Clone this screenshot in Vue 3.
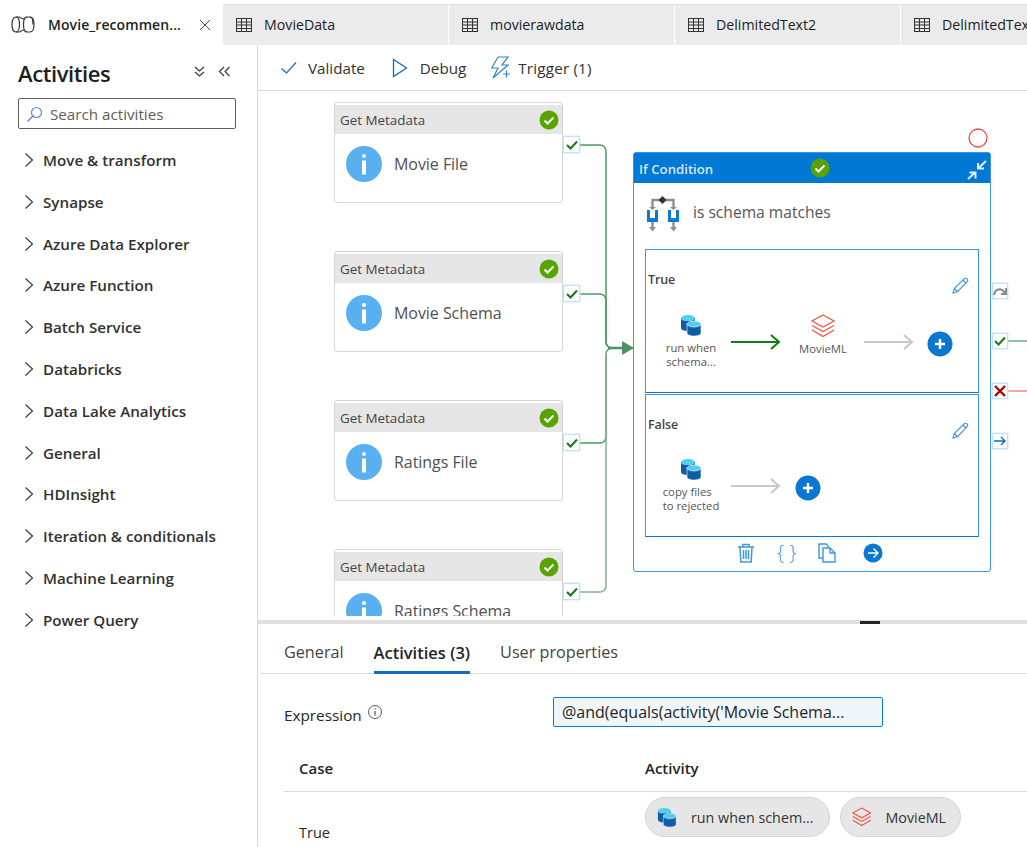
<script setup>
const tabs = ['MovieData', 'movierawdata', 'DelimitedText2', 'DelimitedText3']
const groups = [
  'Move & transform', 'Synapse', 'Azure Data Explorer', 'Azure Function', 'Batch Service', 'Databricks',
  'Data Lake Analytics', 'General', 'HDInsight', 'Iteration & conditionals', 'Machine Learning', 'Power Query'
]
const nodes = ['Movie File', 'Movie Schema', 'Ratings File', 'Ratings Schema']
</script>

<template>
  <div class="app">
    <div class="tabs">
      <div class="tab active">
        <svg class="pipe-ic" width="24" height="17" viewBox="0 0 24 17" fill="none" stroke="#333" stroke-width="1.200">
          <path d="M5 1h3c2 0 2.500 2 4 2s2-2 4-2h3c2.500 0 4 3 4 7.500S21.500 16 19 16h-3c-2 0-2.500-2-4-2s-2 2-4 2H5c-2.500 0-4-3-4-7.500S2.500 1 5 1z" />
          <path d="M5 1c2 0 3.500 3 3.500 7.500S7 16 5 16M16 1c-2 0-3.500 3-3.500 7.500S14 16 16 16M19 1c2 0 3 3 3 7.500" />
        </svg>
        <span class="tab-name">Movie_recommen...</span>
        <svg class="close-ic" width="12" height="12" viewBox="0 0 12 12" stroke="#444" stroke-width="1"><path d="M1 1l10 10M11 1L1 11" /></svg>
      </div>
      <div v-for="t in tabs" :key="t" class="tab">
        <svg width="16" height="14" viewBox="0 0 16 14" fill="none" stroke="#333" stroke-width="1">
          <rect x="0.5" y="0.5" width="15" height="13" />
          <path d="M0 4h16M0 7h16M0 10.500h16M5.500 0v14M10.500 0v14" />
        </svg>
        <span class="tab-name">{{ t }}</span>
      </div>
    </div>

    <div class="body">
      <aside class="side">
        <div class="side-head">
          <h1>Activities</h1>
          <svg width="13" height="13" viewBox="0 0 13 13" fill="none" stroke="#333" stroke-width="1.100"><path d="M2 2l4.500 4 4.500-4M2 7l4.500 4 4.500-4" /></svg>
          <svg class="collapse" width="13" height="13" viewBox="0 0 13 13" fill="none" stroke="#333" stroke-width="1.100"><path d="M6 2L1.500 6.500 6 11M11.500 2L7 6.500l4.500 4.500" /></svg>
        </div>
        <div class="search">
          <svg width="17" height="17" viewBox="0 0 17 17" fill="none" stroke="#7a6fe0" stroke-width="1.200">
            <circle cx="10.500" cy="6.500" r="5" stroke="#5a8fe0" />
            <path d="M7 10l-5.500 5.500" />
          </svg>
          <span>Search activities</span>
        </div>
        <ul class="groups">
          <li v-for="g in groups" :key="g">
            <svg width="10" height="16" viewBox="0 0 10 16" fill="none" stroke="#333" stroke-width="1.100"><path d="M1.500 1.500L8.500 8l-7 6.500" /></svg>
            <span>{{ g }}</span>
          </li>
        </ul>
      </aside>

      <main class="main">
        <div class="toolbar">
          <div class="tool validate">
            <svg width="18" height="14" viewBox="0 0 18 14" fill="none" stroke="#0f6cbd" stroke-width="1.200"><path d="M1.500 7.500l5 4.500L16 1.500" /></svg>
            <span>Validate</span>
          </div>
          <div class="tool debug">
            <svg width="16" height="20" viewBox="0 0 16 20" fill="none" stroke="#0f6cbd" stroke-width="1.300"><path d="M1.500 1.500L14.500 10 1.500 18.500z" /></svg>
            <span>Debug</span>
          </div>
          <div class="tool trigger">
            <svg width="20" height="23" viewBox="0 0 20 23" fill="none" stroke="#2f83d0" stroke-width="1.200"><path d="M7 1h10l-6 8h6L2 22l5-10H.8zM12 18h7M15.500 14.500v7" /></svg>
            <span>Trigger (1)</span>
          </div>
        </div>

        <div class="canvas">
          <svg class="wires" width="769" height="525" viewBox="258 91 769 525" fill="none">
            <g stroke="#7fb58d" stroke-width="1.500">
              <path d="M580 145h20a6 6 0 0 1 6 6v191a6 6 0 0 0 6 6" stroke="#4f9a63" />
              <path d="M580 294h20a6 6 0 0 1 6 6v42a6 6 0 0 0 6 6" stroke="#4f9a63" />
              <path d="M580 443h20a6 6 0 0 0 6-6v-83a6 6 0 0 1 6-6" stroke="#4f9a63" />
              <path d="M580 592h20a6 6 0 0 0 6-6V354a6 6 0 0 1 6-6" />
            </g>
            <path d="M608 348h14" stroke="#4a9360" stroke-width="2.500" />
            <path d="M622 341l12 7-12 7z" fill="#4a9360" />
            <path d="M1007 341h20" stroke="#6fae80" stroke-width="1.500" />
            <path d="M1007 391h20" stroke="#ee8d7a" stroke-width="1.500" />
          </svg>

          <div class="node-col">
            <div v-for="n in nodes" :key="n" class="node">
              <div class="node-head">
                <span>Get Metadata</span>
                <svg class="ok" width="20" height="20" viewBox="0 0 20 20"><circle cx="10" cy="10" r="9.500" fill="#57a300" /><path d="M5.500 10.500l3 3 6-6" fill="none" stroke="#fff" stroke-width="2" /></svg>
              </div>
              <div class="node-body">
                <svg width="36" height="36" viewBox="0 0 36 36"><circle cx="18" cy="18" r="18" fill="#59b0f0" /><rect x="16" y="14.500" width="4" height="14" fill="#fff" /><rect x="16" y="8" width="4" height="4" rx="2" fill="#fff" /></svg>
                <span>{{ n }}</span>
              </div>
              <div class="port">
                <svg width="12" height="10" viewBox="0 0 12 10" fill="none" stroke="#107c10" stroke-width="2"><path d="M1 5l3.500 3.500L11 1.500" /></svg>
              </div>
            </div>
          </div>

          <svg class="red-dot" width="20" height="20" viewBox="0 0 20 20" fill="none" stroke="#f04848" stroke-width="1.300"><circle cx="10" cy="10" r="9" /></svg>

          <section class="ifbox">
            <header class="if-head">
              <span class="if-title">If Condition</span>
              <svg class="if-ok" width="20" height="20" viewBox="0 0 20 20"><circle cx="10" cy="10" r="9.500" fill="#57a300" /><path d="M5.500 10.500l3 3 6-6" fill="none" stroke="#fff" stroke-width="2" /></svg>
              <svg class="if-exp" width="20" height="20" viewBox="0 0 20 20" fill="none" stroke="#dceefb" stroke-width="2"><path d="M19 1l-8 7.500M11 3v5.500h6M1 19l7-6.500M2.500 12.500h6v6" /></svg>
            </header>
            <div class="if-name">
              <svg width="36" height="36" viewBox="0 0 36 36" fill="none">
                <path d="M7.500 12V4h21v8" stroke="#8f8f8f" stroke-width="2.400" />
                <path d="M4 11h7l-3.500 3zM25 11h7l-3.500 3zM4 31h7l-3.500 4.500zM25 31h7l-3.500 4.500z" fill="#8f8f8f" />
                <path d="M7.500 26v6M28.500 26v6" stroke="#8f8f8f" stroke-width="2.400" />
                <path d="M17.500 0l4 4-4 4-4-4z" fill="#333" />
                <path d="M2 14h3v8h5v-8h3v12H2zM23 14h3v8h5v-8h3v12H23z" fill="#0f78d4" />
              </svg>
              <span>is schema matches</span>
            </div>

            <div class="branch">
              <div class="branch-label">True</div>
              <svg class="pencil" width="17" height="17" viewBox="0 0 17 17" fill="none" stroke="#3a93e0" stroke-width="1.100"><path d="M1 16l1.300-4.500L12 1.800a2 2 0 0 1 3 3L5.500 14.700zM2.300 11.500l3.200 3.200M10.800 3l3 3" /></svg>
              <div class="flow">
                <div class="act">
                  <svg width="22" height="22" viewBox="0 0 22 22"><ellipse cx="8" cy="4" rx="7" ry="3" fill="#4fd0ee" /><path d="M1 4v10c0 1.700 3 3 7 3s7-1.300 7-3V4c0 1.700-3 3-7 3S1 5.700 1 4z" fill="#0f5ca8" /><path d="M7 10v9c0 1.700 3 3 7 3s7-1.300 7-3v-9z" fill="#0f5ca8" stroke="#fff" stroke-width=".6" /><ellipse cx="14" cy="10" rx="7" ry="3" fill="#4fd0ee" stroke="#fff" stroke-width=".6" /></svg>
                  <span>run when<br>schema...</span>
                </div>
                <svg class="arr" width="52" height="16" viewBox="0 0 52 16" fill="none" stroke="#107c10" stroke-width="2"><path d="M1 8h48M41 1l8 7-8 7" /></svg>
                <div class="act ml">
                  <svg width="24" height="24" viewBox="0 0 24 24" fill="none" stroke="#ee5a44" stroke-width="1.400"><path d="M12 1l11 6-11 6L1 7zM1 11.500l11 6 11-6M1 16l11 6.500L23 16" /></svg>
                  <span>MovieML</span>
                </div>
                <svg class="arr gray" width="52" height="16" viewBox="0 0 52 16" fill="none" stroke="#c8c8c8" stroke-width="2"><path d="M1 8h48M41 1l8 7-8 7" /></svg>
                <svg class="plus" width="26" height="26" viewBox="0 0 26 26"><circle cx="13" cy="13" r="12.500" fill="#0a78d2" /><path d="M8 13h10M13 8v10" stroke="#fff" stroke-width="2.400" /></svg>
              </div>
            </div>

            <div class="branch false">
              <div class="branch-label">False</div>
              <svg class="pencil" width="17" height="17" viewBox="0 0 17 17" fill="none" stroke="#3a93e0" stroke-width="1.100"><path d="M1 16l1.300-4.500L12 1.800a2 2 0 0 1 3 3L5.500 14.700zM2.300 11.500l3.200 3.200M10.800 3l3 3" /></svg>
              <div class="flow">
                <div class="act copy">
                  <svg width="22" height="22" viewBox="0 0 22 22"><ellipse cx="8" cy="4" rx="7" ry="3" fill="#4fd0ee" /><path d="M1 4v10c0 1.700 3 3 7 3s7-1.300 7-3V4c0 1.700-3 3-7 3S1 5.700 1 4z" fill="#0f5ca8" /><path d="M7 10v9c0 1.700 3 3 7 3s7-1.300 7-3v-9z" fill="#0f5ca8" stroke="#fff" stroke-width=".6" /><ellipse cx="14" cy="10" rx="7" ry="3" fill="#4fd0ee" stroke="#fff" stroke-width=".6" /></svg>
                  <span>copy files<br>to rejected</span>
                </div>
                <svg class="arr" width="52" height="16" viewBox="0 0 52 16" fill="none" stroke="#c8c8c8" stroke-width="2"><path d="M1 8h48M41 1l8 7-8 7" /></svg>
                <svg class="plus" width="26" height="26" viewBox="0 0 26 26"><circle cx="13" cy="13" r="12.500" fill="#0a78d2" /><path d="M8 13h10M13 8v10" stroke="#fff" stroke-width="2.400" /></svg>
              </div>
            </div>

            <footer class="if-actions">
              <svg width="16" height="20" viewBox="0 0 16 20" fill="none" stroke="#3d97e3" stroke-width="1.500"><path d="M0 4h16M5 4V1.500h6V4M2 4l.8 15h10.400L14 4M5.500 7v9M8 7v9M10.500 7v9" /></svg>
              <span class="braces">{ }</span>
              <svg width="18" height="20" viewBox="0 0 18 20" fill="none" stroke="#3d97e3" stroke-width="1.400"><path d="M5 15H1V1h7l3 3M5 5h7l5 5v9H5zM12 5v5h5" /></svg>
              <svg width="20" height="20" viewBox="0 0 20 20"><circle cx="10" cy="10" r="9.500" fill="#0a78d2" /><path d="M5 10h10M10.500 5.500L15 10l-4.500 4.500" fill="none" stroke="#fff" stroke-width="1.400" /></svg>
            </footer>
          </section>

          <div class="side-ports">
            <div class="port-s"><svg width="14" height="10" viewBox="0 0 14 10" fill="none" stroke="#8a8a8a" stroke-width="2"><path d="M1 9c1-6 7-8 11-2M13 2v6H8" /></svg></div>
            <div class="port-s"><svg width="12" height="10" viewBox="0 0 12 10" fill="none" stroke="#107c10" stroke-width="2"><path d="M1 5l3.500 3.500L11 1.500" /></svg></div>
            <div class="port-s"><svg width="12" height="12" viewBox="0 0 12 12" fill="none" stroke="#a80000" stroke-width="2.400"><path d="M1 1l10 10M11 1L1 11" /></svg></div>
            <div class="port-s"><svg width="12" height="10" viewBox="0 0 12 10" fill="none" stroke="#0f6cbd" stroke-width="1.400"><path d="M0 5h11M7 1l4 4-4 4" /></svg></div>
          </div>
        </div>

        <div class="splitter"><i></i></div>

        <div class="panel">
          <div class="ptabs">
            <span>General</span>
            <span class="on">Activities (3)</span>
            <span>User properties</span>
          </div>
          <div class="expr">
            <label>Expression</label>
            <svg width="14" height="14" viewBox="0 0 14 14" fill="none" stroke="#333"><circle cx="7" cy="7" r="6.500" stroke-width=".8" /><path d="M7 6v4.500M7 3.500v1.200" stroke-width="1" /></svg>
            <div class="expr-input">@and(equals(activity('Movie Schema...</div>
          </div>
          <div class="case-head">
            <span class="c1">Case</span>
            <span>Activity</span>
          </div>
          <div class="case-row">
            <span class="c1 true">True</span>
            <div class="chips">
              <div class="chip">
                <svg width="20" height="20" viewBox="0 0 22 22"><ellipse cx="8" cy="4" rx="7" ry="3" fill="#4fd0ee" /><path d="M1 4v10c0 1.700 3 3 7 3s7-1.300 7-3V4c0 1.700-3 3-7 3S1 5.700 1 4z" fill="#0f5ca8" /><path d="M7 10v9c0 1.700 3 3 7 3s7-1.300 7-3v-9z" fill="#0f5ca8" stroke="#e3e3e3" stroke-width=".6" /><ellipse cx="14" cy="10" rx="7" ry="3" fill="#4fd0ee" stroke="#e3e3e3" stroke-width=".6" /></svg>
                <span>run when schem...</span>
              </div>
              <div class="chip">
                <svg width="20" height="20" viewBox="0 0 24 24" fill="none" stroke="#ee5a44" stroke-width="1.400"><path d="M12 1l11 6-11 6L1 7zM1 11.500l11 6 11-6M1 16l11 6.500L23 16" /></svg>
                <span>MovieML</span>
              </div>
            </div>
          </div>
        </div>
      </main>
    </div>
  </div>
</template>

<style>
html, body { margin: 0; background: #fff; overflow: hidden; }
</style>

<style scoped>
.app {
  width: 1027px; height: 847px; overflow: hidden; background: #fff; color: #252423;
  font-family: "Open Sans", "Noto Sans", Arial, sans-serif; font-size: 14px;
}
.tabs { display: flex; height: 45px; padding-top: 4px; box-sizing: border-box; overflow: hidden; position: relative; }
.tabs::before { content: ""; position: absolute; left: 0; right: 0; top: 4px; height: 1px; background: #e0e0e0; }
.tab {
  flex: 0 0 226px; box-sizing: border-box; display: flex; align-items: center; gap: 12px; padding: 0 0 0 13px;
  background: #ebebeb; border-right: 1px solid #fff; font-size: 14.200px; color: #201f1e;
}
.tab.active { flex-basis: 223px; background: #fff; padding-left: 11px; gap: 13px; border-right: 0; z-index: 1; font-size: 14px; }
.tab.active .tab-name { font-weight: 600; letter-spacing: 0.08px; }
.close-ic { margin-left: auto; margin-right: 12px; }

.body { display: flex; height: 802px; }
.side { width: 258px; flex: none; box-sizing: border-box; border-right: 1px solid #d8d8d8; padding: 0 21px 0 18px; }
.side-head { display: flex; align-items: center; height: 53px; }
.side-head h1 { flex: 1; margin: 0; font-size: 22px; font-weight: 600; letter-spacing: -0.4px; color: #201f1e; padding-top: 2px; }
.collapse { margin-left: 12px; margin-right: 5px; }
.search {
  height: 31px; box-sizing: border-box; border: 1px solid #605e5c; border-radius: 2px; display: flex; align-items: center; gap: 7px; padding-left: 7px;
  color: #605e5c; font-size: 15.200px; padding-top: 1px;
}
.groups { list-style: none; margin: 10px 0 0; padding: 0 0 0 6px; }
.groups li { height: 41.820px; display: flex; align-items: center; gap: 9px; font-size: 15.200px; font-weight: 600; color: #323130; }
.groups svg { flex: none; }

.main { flex: 1; min-width: 0; }
.toolbar { height: 46px; box-sizing: border-box; border-bottom: 1px solid #d8d8d8; display: flex; align-items: center; padding-left: 22px; font-size: 15.200px; color: #323130; }
.tool { display: flex; align-items: center; gap: 10px; }
.debug { margin-left: 27px; gap: 12px; }
.trigger { margin-left: 25px; gap: 7px; letter-spacing: 0.2px; }

.canvas { position: relative; height: 525px; overflow: hidden; }
.wires { position: absolute; left: 0; top: 0; }
.node-col { position: absolute; left: 76px; top: 11px; display: flex; flex-direction: column; gap: 48px; }
.node { position: relative; width: 229px; height: 101px; box-sizing: border-box; border: 1px solid #d6d6d6; border-radius: 3px; background: #fff; padding-top: 2px; }
.node-head { height: 29px; background: #e6e6e6; display: flex; align-items: center; justify-content: space-between; padding: 1px 3px 0 5px; box-sizing: border-box; font-size: 13.400px; color: #444; }
.ok { margin-top: -1px; }
.node-body { display: flex; align-items: center; gap: 12px; padding: 12px 0 0 11px; font-size: 16px; letter-spacing: -0.05px; color: #505050; }
.port {
  position: absolute; left: 228px; top: 33px; width: 17px; height: 17px; box-sizing: border-box; background: #fff; border: 1px solid #c4e0f7; box-shadow: 0 0 2px #bcdcf6;
  display: flex; align-items: center; justify-content: center;
}

.red-dot { position: absolute; left: 710px; top: 37px; }
.ifbox {
  position: absolute; left: 375px; top: 61px; width: 358px; height: 420px; box-sizing: border-box; background: #fff;
  border: 1px solid #3a96e2; border-radius: 3px;
}
.if-head { height: 30px; box-sizing: border-box; background: #0078d4; color: #d4e8f9; display: flex; align-items: center; padding: 2px 0 0 5px; position: relative; font-size: 13.200px; font-weight: 600; }
.if-ok { position: absolute; left: 176px; top: 5px; }
.if-exp { position: absolute; right: 3px; top: 7px; }
.if-name { display: flex; align-items: center; gap: 12px; height: 66px; padding-left: 11px; font-size: 15.600px; color: #555; }
.if-name svg { margin-top: -4px; }
.if-name span { margin-top: -8px; }
.branch { position: relative; margin: 0 11px; height: 144px; box-sizing: border-box; border: 1px solid #3a96e2; border-bottom-color: #0078d4; }
.branch.false { margin-top: 1px; height: 143px; }
.branch-label { position: absolute; left: 2px; top: 21px; font-size: 12.500px; font-weight: 600; letter-spacing: -0.1px; color: #444; }
.pencil { position: absolute; right: 9px; top: 27px; }
.flow { position: absolute; left: 10px; top: 64px; display: flex; align-items: flex-start; }
.false .flow { top: 63px; }
.act { width: 70px; display: flex; flex-direction: column; align-items: center; font-size: 11.300px; line-height: 14px; text-align: center; color: #555; }
.act span { margin-top: 5px; }
.act.ml { margin-left: 6px; width: 70px; }
.act.ml span { margin-top: 4px; }
.act.copy span { text-align: left; }
.arr { margin: 20px 0 0 4px; flex: none; }
.arr.gray { margin-left: 5px; }
.plus { margin: 17px 0 0 12px; flex: none; }
.false .plus { margin-left: 13px; margin-top: 17px; }
.if-actions { display: flex; align-items: center; height: 31px; padding-left: 104px; }
.if-actions svg:nth-child(3) { margin-left: 22px; }
.if-actions svg:nth-child(4) { margin-left: 27px; }
.braces { margin-left: 23px; color: #3d97e3; font-size: 20px; font-weight: 300; line-height: 24px; }

.side-ports { position: absolute; left: 734px; top: 192px; display: flex; flex-direction: column; gap: 34px; }
.port-s { width: 16px; height: 16px; box-sizing: border-box; background: #fff; border: 1px solid #c4e0f7; box-shadow: 0 0 2px #bcdcf6; display: flex; align-items: center; justify-content: center; }

.splitter { position: relative; height: 4px; margin-top: 4px; background: #e0e0e0; }
.splitter i { position: absolute; left: 602px; top: 1px; width: 20px; height: 3px; background: #252423; }

.panel { height: 223px; overflow: hidden; }
.ptabs { margin-left: 2px; height: 50px; box-sizing: border-box; border-bottom: 1px solid #dcdcdc; display: flex; gap: 30px; padding: 17px 0 0 24px; font-size: 16.200px; color: #444; }
.ptabs span { height: 33px; box-sizing: border-box; }
.ptabs .on { color: #252423; font-weight: 600; font-size: 16.500px; border-bottom: 3px solid #0f6cbd; }
.expr { display: flex; align-items: flex-start; margin-top: 23px; padding-left: 26px; font-size: 15.300px; height: 30px; }
.expr label { margin-top: 8px; font-weight: 500; width: 84px; }
.expr svg { margin-top: 8px; }
.expr-input {
  margin-left: 171px; width: 330px; height: 30px; box-sizing: border-box; background: #eff6fc; border: 1px solid #0f78d4; border-radius: 2px;
  padding: 3px 8px; font-size: 16px; white-space: nowrap; font-weight: 400;
}
.case-head { display: flex; margin: 31px 0 0 26px; padding-bottom: 13px; border-bottom: 1px solid #dcdcdc; font-size: 15px; font-weight: 600; }
.c1 { width: 346px; padding-left: 15px; flex: none; }
.case-row { display: flex; margin-left: 26px; padding-top: 5px; font-size: 14.500px; }
.true { padding-top: 26px; }
.chips { display: flex; gap: 10px; }
.chip {
  height: 40px; box-sizing: border-box; border: 1px solid #d4d4d4; border-radius: 20px; background: #e6e6e6; display: flex; align-items: center;
  gap: 14px; padding: 0 14px 0 11px; font-size: 14.300px; color: #333;
}
.chip:first-child { width: 185px; }
.chip:last-child { width: 121px; }
</style>
